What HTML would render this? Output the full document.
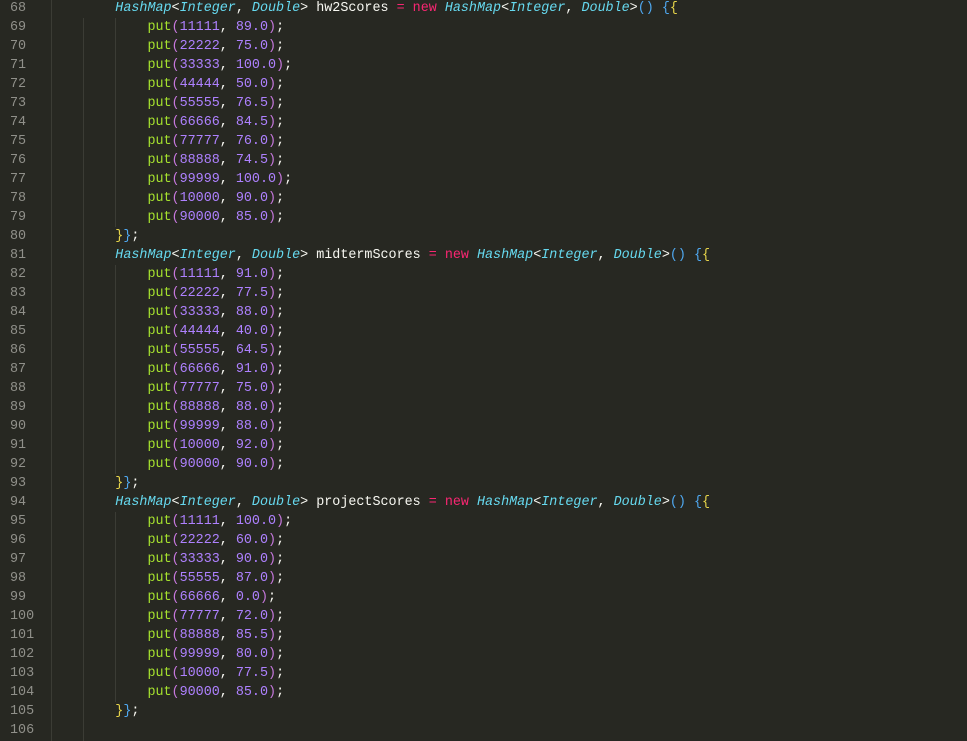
<!DOCTYPE html>
<html><head><meta charset="utf-8"><style>
body{margin:0;background:#272822;width:967px;height:741px;overflow:hidden;font-family:"Liberation Mono",monospace;font-size:13.4px;}
.l{position:absolute;left:0;height:19px;line-height:19px;white-space:pre;width:967px}
.n{position:absolute;left:10px;color:#90908a}
.c{position:absolute;left:51px;color:#f8f8f2}
.g{position:absolute;top:0;bottom:0;width:1px;background:#3b3c35}
.t{color:#66d9ef;font-style:italic}.f{color:#a6e22e}.m{color:#ae81ff}.k{color:#f92672}.p{color:#c678dd}.b{color:#4fa8f0}.y{color:#e6d44a}
</style></head><body>
<div class="g" style="left:51px"></div>
<div class="g" style="left:83px;top:18px"></div>
<div id="o"></div>
<script>
var L=[];
function hdr(name){return '        <span class="t">HashMap</span>&lt;<span class="t">Integer</span>, <span class="t">Double</span>&gt; '+name+' <span class="k">=</span> <span class="k">new</span> <span class="t">HashMap</span>&lt;<span class="t">Integer</span>, <span class="t">Double</span>&gt;<span class="b">()</span> <span class="b">{</span><span class="y">{</span>';}
function put(a,b){return '            <span class="f">put</span><span class="p">(</span><span class="m">'+a+'</span>, <span class="m">'+b+'</span><span class="p">)</span>;';}
var end='        <span class="y">}</span><span class="b">}</span>;';
var d=[["hw2Scores",[["11111","89.0"],["22222","75.0"],["33333","100.0"],["44444","50.0"],["55555","76.5"],["66666","84.5"],["77777","76.0"],["88888","74.5"],["99999","100.0"],["10000","90.0"],["90000","85.0"]]],
["midtermScores",[["11111","91.0"],["22222","77.5"],["33333","88.0"],["44444","40.0"],["55555","64.5"],["66666","91.0"],["77777","75.0"],["88888","88.0"],["99999","88.0"],["10000","92.0"],["90000","90.0"]]],
["projectScores",[["11111","100.0"],["22222","60.0"],["33333","90.0"],["55555","87.0"],["66666","0.0"],["77777","72.0"],["88888","85.5"],["99999","80.0"],["10000","77.5"],["90000","85.0"]]]];
d.forEach(function(s){L.push(hdr(s[0]));s[1].forEach(function(p){L.push(put(p[0],p[1]));});L.push(end);});
L.push('');
var h='';
L.forEach(function(c,i){h+='<div class="l" style="top:'+(-1+19*i)+'px"><span class="n">'+(68+i)+'</span><span class="c">'+c+'</span></div>';
 if(c.indexOf('put')>=0)h+='<div style="position:absolute;left:115px;top:'+(-1+19*i)+'px;width:1px;height:19px;background:#3b3c35"></div>';});
document.getElementById('o').innerHTML=h;
</script>
</body></html>
